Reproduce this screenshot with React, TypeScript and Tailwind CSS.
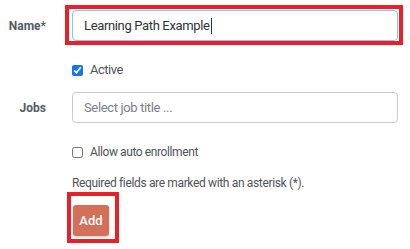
import React from 'react';

export default function App() {
  return (
    <div className="relative w-[410px] h-[249px] bg-white font-['Roboto',sans-serif] text-[#4f545c] overflow-hidden">
      <div className="pt-[10px] pr-[12px]">
        {/* Name */}
        <div className="flex items-center h-[31px]">
          <label className="w-[46px] text-right text-[12px] font-bold text-[#555b63]">Name*</label>
          <div className="ml-[26px] flex-1 h-full rounded-[4px] border border-[#8ec1f2] flex items-center px-[11px]">
            <span className="text-[13px] tracking-[-0.35px] text-[#2f3338]">Learning Path Example</span>
            <span className="ml-px w-px h-[16px] bg-[#2f3338]" />
          </div>
        </div>

        {/* Active */}
        <div className="mt-[20px] ml-[72px] flex items-center h-[18px] gap-[7px]">
          <input type="checkbox" defaultChecked className="w-[11px] h-[11px] m-0 accent-[#1a73e8]" />
          <span className="text-[13px] tracking-[-0.5px]">Active</span>
        </div>

        {/* Jobs */}
        <div className="mt-[13px] flex items-center h-[31px]">
          <label className="w-[46px] text-right text-[12px] font-bold text-[#555b63]">Jobs</label>
          <div className="ml-[26px] flex-1 h-full rounded-[4px] border border-[#c9cccf] flex items-center px-[11px]">
            <span className="text-[13px] tracking-[-0.35px] text-[#7a7f86]">Select job title ...</span>
          </div>
        </div>

        {/* Allow auto enrollment */}
        <div className="mt-[20px] ml-[72px] flex items-center h-[18px] gap-[7px]">
          <input type="checkbox" className="w-[11px] h-[11px] m-0" />
          <span className="text-[12px] tracking-[-0.4px]">Allow auto enrollment</span>
        </div>

        <p className="mt-[13px] ml-[72px] h-[18px] leading-[18px] text-[12px] tracking-[-0.35px]">
          Required fields are marked with an asterisk (*).
        </p>

        <button className="mt-[13px] ml-[73px] w-[36px] h-[31px] rounded-[3px] bg-[#d2705a] text-white text-[13px] font-medium shadow-[0_1px_3px_rgba(0,0,0,0.25)]">
          Add
        </button>
      </div>

      {/* highlight boxes */}
      <div className="absolute left-[65px] top-[5px] w-[338px] h-[40px] border-[4px] border-[#e8202a]" />
      <div className="absolute left-[67px] top-[192px] w-[52px] h-[51px] border-[4px] border-[#e8202a]" />
    </div>
  );
}
